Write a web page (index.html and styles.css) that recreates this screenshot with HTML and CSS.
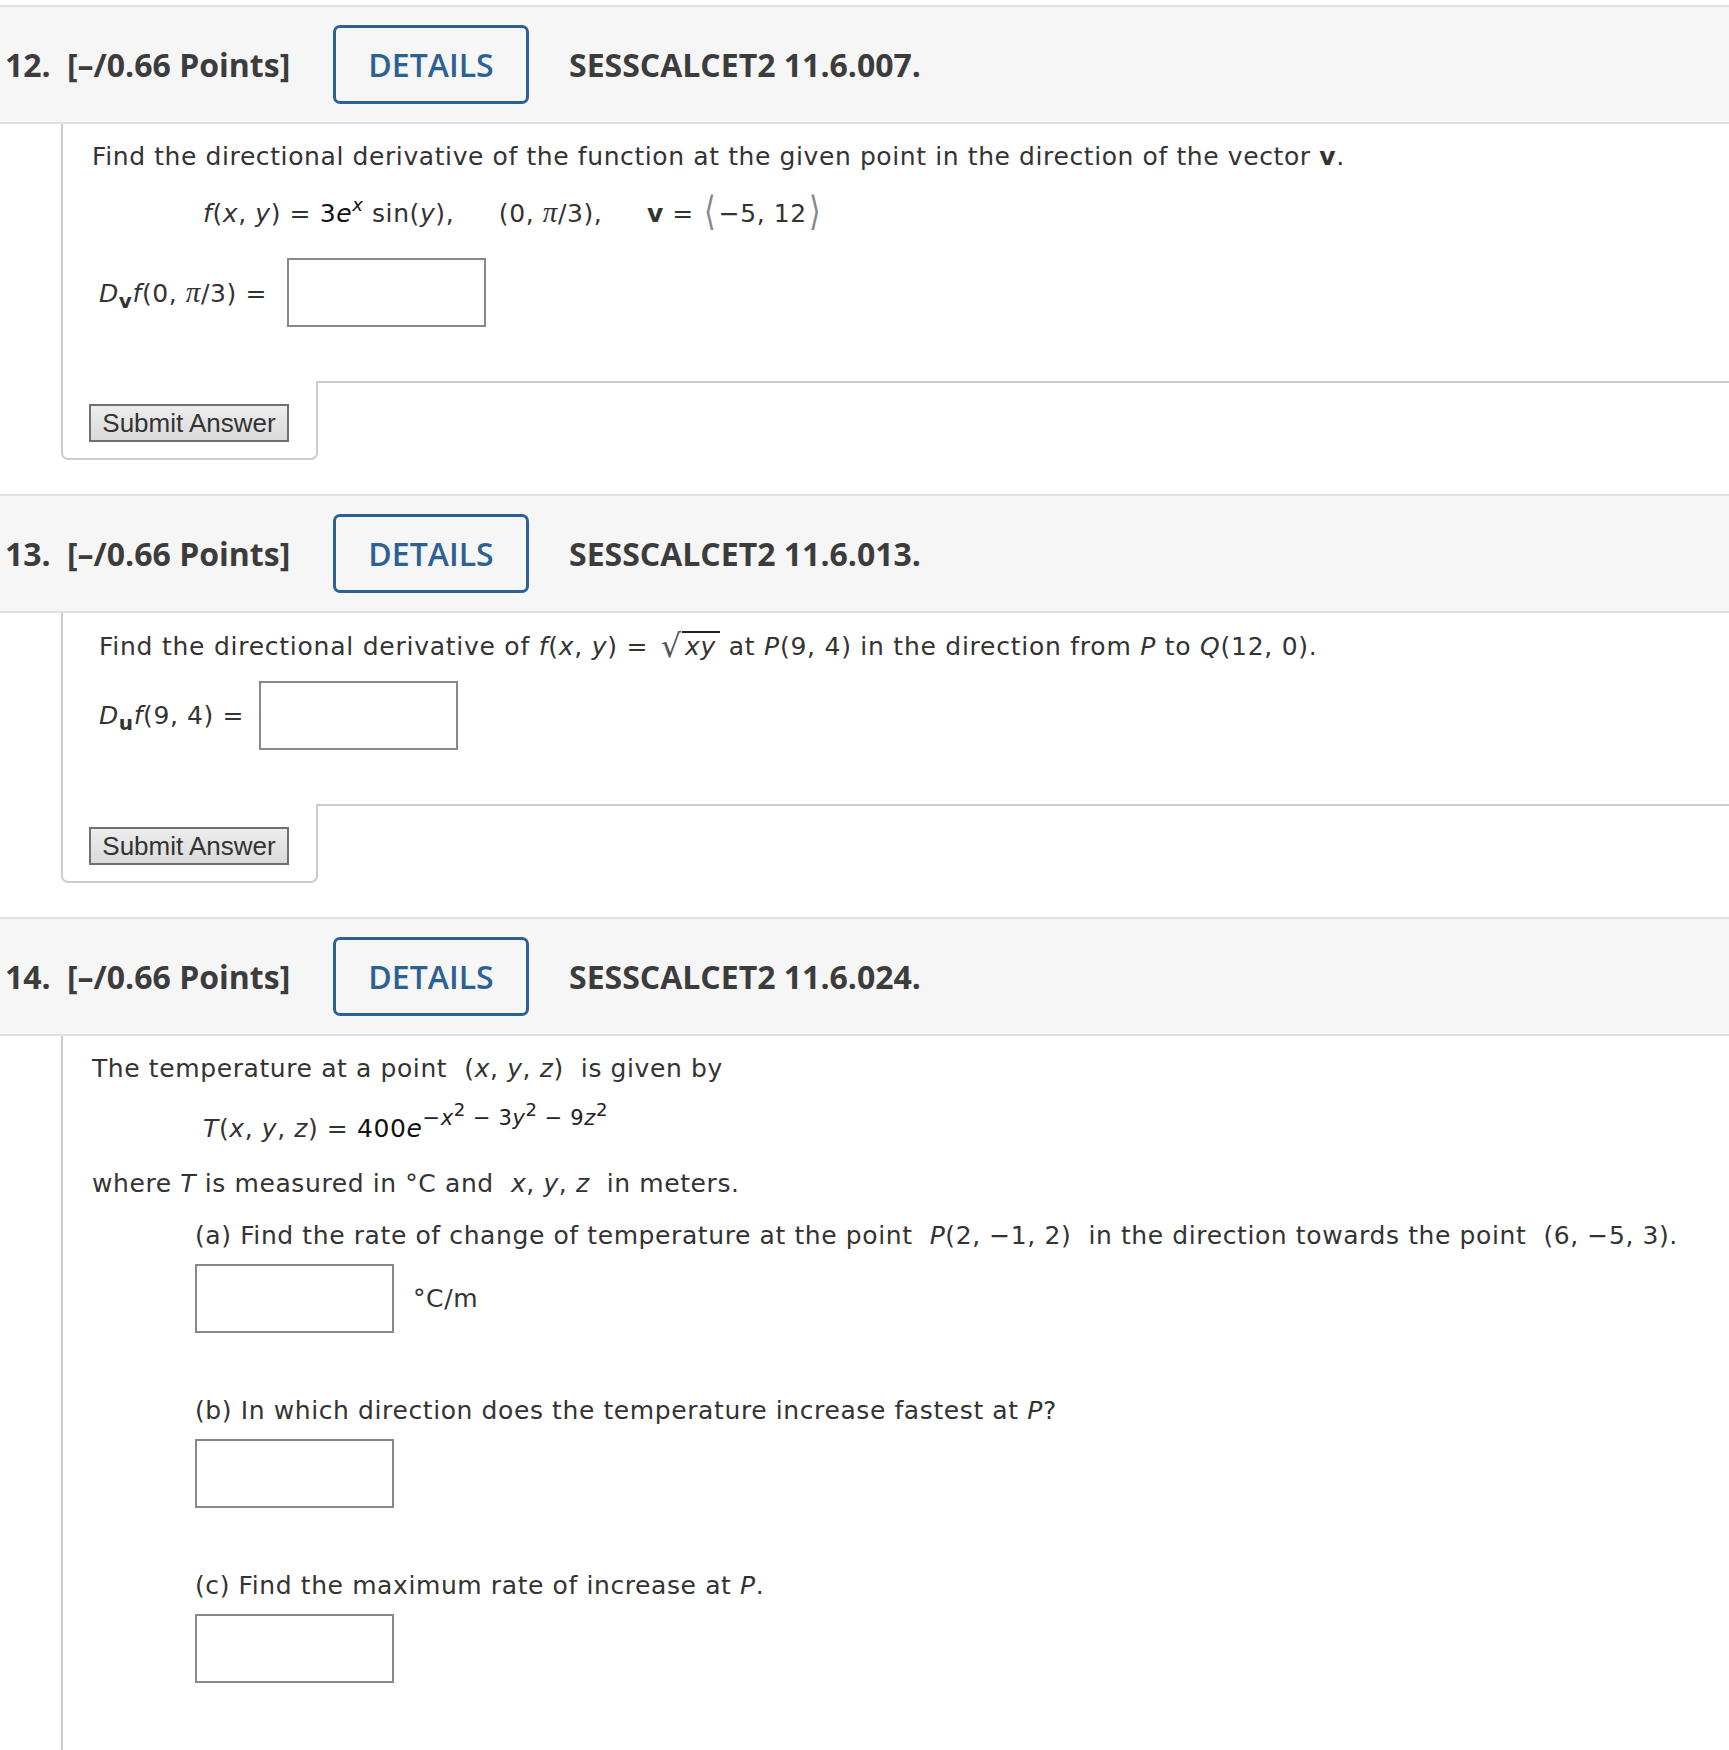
FILE: index.html
```html
<!DOCTYPE html>
<html lang="en">
<head>
    <meta charset="UTF-8">
    <title>Assignment</title>
    <link rel="stylesheet" href="styles.css">
</head>
<body>

<div class="page">

    <!-- question 12 -->
    <div class="question">
        <div class="q-header">
            <span class="q-num">12.</span>
            <span class="q-points">[–/0.66 Points]</span>
            <button class="details">DETAILS</button>
            <span class="q-code">SESSCALCET2 11.6.007.</span>
        </div>
        <div class="q-body">
            <div class="q-content q12">
                <p class="prompt">Find the directional derivative of the function at the given point in the direction of the vector <b>v</b>.</p>
                <div class="formula">
                    <span class="math"><i>f</i>(<i>x</i>, <i>y</i>) = <span class="dark">3<i>e</i><sup><i>x</i></sup></span> sin(<i>y</i>),</span>
                    <span class="math gap">(0, <span class="pi">π</span>/3),</span>
                    <span class="math gap"><b>v</b> = <span class="angle">⟨</span>−5, 12<span class="angle">⟩</span></span>
                </div>
                <div class="answer-row">
                    <span class="label"><i>D</i><sub><b>v</b></sub><i>f</i>(0, <span class="pi">π</span>/3) =</span>
                    <input type="text" class="answer">
                </div>
            </div>
            <div class="submit-row">
                <div class="submit-tab"><button class="submit">Submit Answer</button></div>
                <div class="submit-rest"></div>
            </div>
        </div>
    </div>

    <!-- question 13 -->
    <div class="question">
        <div class="q-header">
            <span class="q-num">13.</span>
            <span class="q-points">[–/0.66 Points]</span>
            <button class="details">DETAILS</button>
            <span class="q-code">SESSCALCET2 11.6.013.</span>
        </div>
        <div class="q-body">
            <div class="q-content q13">
                <p class="prompt indent">Find the directional derivative of <i>f</i>(<i>x</i>, <i>y</i>) = <span class="sqrt">√</span><span class="radicand"><i>xy</i></span> at <i>P</i>(9, 4) in the direction from <i>P</i> to <i>Q</i>(12, 0).</p>
                <div class="answer-row">
                    <span class="label"><i>D</i><sub><b>u</b></sub><i>f</i>(9, 4) =</span>
                    <input type="text" class="answer">
                </div>
            </div>
            <div class="submit-row">
                <div class="submit-tab"><button class="submit">Submit Answer</button></div>
                <div class="submit-rest"></div>
            </div>
        </div>
    </div>

    <!-- question 14 -->
    <div class="question">
        <div class="q-header">
            <span class="q-num">14.</span>
            <span class="q-points">[–/0.66 Points]</span>
            <button class="details">DETAILS</button>
            <span class="q-code">SESSCALCET2 11.6.024.</span>
        </div>
        <div class="q-body">
            <div class="q-content q14">
                <p class="prompt">The temperature at a point &nbsp;(<i>x</i>, <i>y</i>, <i>z</i>)&nbsp; is given by</p>
                <div class="formula temp">
                    <span class="math"><i>T</i>(<i>x</i>, <i>y</i>, <i>z</i>) = <span class="dark">400<i>e</i></span><sup class="exp">−<i>x</i><sup>2</sup> − 3<i>y</i><sup>2</sup> − 9<i>z</i><sup>2</sup></sup></span>
                </div>
                <p class="prompt where">where <i>T</i> is measured in °C and &nbsp;<i>x</i>, <i>y</i>, <i>z</i>&nbsp; in meters.</p>

                <div class="part">
                    <p class="part-text">(a) Find the rate of change of temperature at the point &nbsp;<i>P</i>(2, −1, 2)&nbsp; in the direction towards the point &nbsp;(6, −5, 3).</p>
                    <div class="part-answer">
                        <input type="text" class="answer">
                        <span class="unit">°C/m</span>
                    </div>
                </div>

                <div class="part">
                    <p class="part-text">(b) In which direction does the temperature increase fastest at <i>P</i>?</p>
                    <div class="part-answer">
                        <input type="text" class="answer">
                    </div>
                </div>

                <div class="part">
                    <p class="part-text">(c) Find the maximum rate of increase at <i>P</i>.</p>
                    <div class="part-answer">
                        <input type="text" class="answer">
                    </div>
                </div>
            </div>
        </div>
    </div>

</div>

</body>
</html>
```

FILE: styles.css
```css
body {
    margin: 0;
    font-family: "DejaVu Sans", Verdana, sans-serif;
    color: #333;
    background-color: #fff;
}

.page {
    padding-top: 5px;
}

/* question header bar */
.q-header {
    display: flex;
    align-items: center;
    box-sizing: border-box;
    height: 119px;
    padding-left: 5px;
    background-color: #f6f6f6;
    border-top: 2px solid #e0e0e0;
    border-bottom: 2px solid #e0e0e0;
    font-family: "Open Sans", sans-serif;
    font-weight: 700;
    font-size: 32px;
    color: #3c3c3c;
}

.q-num {
    width: 62px;
}

.q-points {
    width: 266px;
}

.details {
    box-sizing: border-box;
    width: 196px;
    height: 79px;
    margin-right: 40px;
    border: 3px solid #2c6194;
    border-radius: 7px;
    background: transparent;
    color: #2c6194;
    font-family: "Open Sans", sans-serif;
    font-weight: 600;
    font-size: 32px;
    padding: 0;
}

/* question body */
.q-body {
    margin-left: 61px;
    margin-bottom: 34px;
}

.q-content {
    border-left: 2px solid #ccc;
    padding-left: 29px;
    font-size: 25px;
    letter-spacing: 0.6px;
    line-height: 36px;
}

.q12 {
    padding-top: 15px;
    padding-bottom: 54px;
}

.q13 {
    padding-top: 16px;
    padding-bottom: 54px;
}

.q14 {
    padding-top: 15px;
    padding-bottom: 80px;
}

.prompt {
    margin: 0;
}

.prompt.indent {
    margin-left: 7px;
    letter-spacing: 0.75px;
}

.formula {
    margin: 19px 0 0 111px;
}

.formula.temp {
    margin-top: 23px;
}

.math {
    white-space: nowrap;
}

.math.gap {
    margin-left: 36px;
}

.dark {
    color: #111;
}

.pi {
    font-family: "Liberation Serif", serif;
    font-style: italic;
    font-size: 29px;
}

.angle {
    display: inline-block;
    color: #888;
    font-size: 40px;
    line-height: 0;
    vertical-align: -3px;
    transform: scaleX(0.75);
}

sup {
    font-size: 18px;
    line-height: 0;
    vertical-align: 11px;
}

sub {
    font-size: 20px;
    line-height: 0;
    vertical-align: -6px;
}

.exp {
    font-size: 21px;
    color: #222;
    vertical-align: 12px;
}

.exp sup {
    font-size: 18px;
    vertical-align: 9px;
}

.sqrt {
    display: inline-block;
    font-size: 32px;
    line-height: 0;
    color: #555;
    vertical-align: -2px;
    margin-left: 4px;
}

.radicand {
    display: inline-block;
    line-height: 27px;
    border-top: 2px solid #222;
    padding: 0 4px 0 3px;
}

.where {
    margin-top: 19px;
}

/* answer inputs */
.answer-row {
    display: flex;
    align-items: center;
    gap: 15px;
    margin-left: 7px;
}

.q12 .answer-row {
    margin-top: 26px;
    gap: 20px;
}

.q13 .answer-row {
    margin-top: 16px;
}

.answer {
    box-sizing: border-box;
    width: 199px;
    height: 69px;
    border: 2px solid #888;
    background-color: #fff;
    margin: 0;
}

.part {
    margin-left: 103px;
}

.part-text {
    margin: 16px 0 0 0;
}

.part + .part .part-text {
    margin-top: 60px;
}

.part-answer {
    display: flex;
    align-items: center;
    gap: 19px;
    margin-top: 10px;
}

/* submit area */
.submit-row {
    display: flex;
}

.submit-tab {
    box-sizing: border-box;
    width: 257px;
    padding: 23px 0 16px 26px;
    border: 2px solid #ccc;
    border-top: none;
    border-radius: 0 0 7px 7px;
}

.submit-rest {
    flex: 1;
    border-top: 2px solid #ccc;
}

.submit {
    box-sizing: border-box;
    width: 200px;
    height: 38px;
    padding: 0;
    border: 2px solid #707070;
    background: linear-gradient(#ededed, #dadada);
    font-family: "Liberation Sans", Arial, sans-serif;
    font-size: 26px;
    color: #333;
}
```
